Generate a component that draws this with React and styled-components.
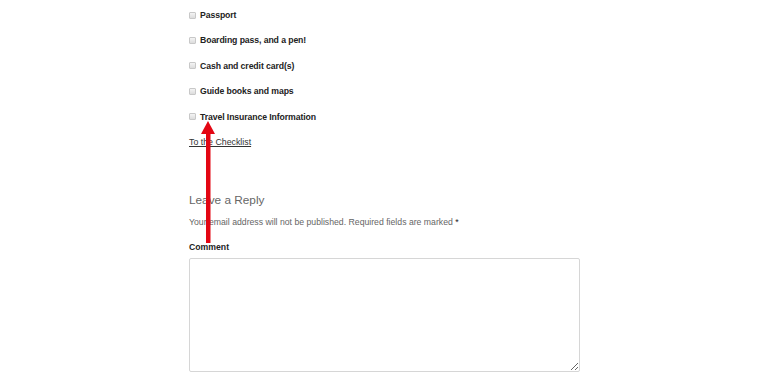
import React from 'react'
import styled, { createGlobalStyle } from 'styled-components'

const GlobalStyle = createGlobalStyle`
  html, body {
    margin: 0;
    padding: 0;
    background: #fff;
  }
  body {
    font-family: "Liberation Sans", Arial, sans-serif;
    color: #222;
  }
`

const Page = styled.div`
  position: relative;
  width: 768px;
  height: 381px;
  overflow: hidden;
  background: #fff;
`

const Content = styled.div`
  width: 391px;
  margin-left: 189px;
  padding-top: 9px;
`

const Checklist = styled.ul`
  list-style: none;
  margin: 0;
  padding: 0;
  display: flex;
  flex-direction: column;
  gap: 13.4px;
`

const Item = styled.li`
  display: flex;
  align-items: center;
  gap: 4px;
  height: 12px;
`

const Box = styled.span`
  width: 5px;
  height: 5px;
  border: 1px solid #c8c8c8;
  background: linear-gradient(#f4f4f4, #dcdcdc);
  border-radius: 1px;
`

const ItemLabel = styled.span`
  font-size: 8.7px;
  font-weight: 700;
  color: #222;
  letter-spacing: -0.1px;
`

const BackLink = styled.a`
  display: inline-block;
  margin-top: 14px;
  font-size: 8.8px;
  color: #333;
  text-decoration: underline;
  text-underline-offset: 1px;
`

const Reply = styled.section`
  margin-top: 44px;
`

const ReplyTitle = styled.h3`
  margin: 0;
  font-size: 11.8px;
  font-weight: 300;
  color: #666;
`

const Notes = styled.p`
  margin: 10px 0 0;
  font-size: 8.7px;
  color: #666;
`

const Required = styled.span`
  color: #222;
`

const FieldLabel = styled.label`
  display: block;
  margin-top: 15px;
  font-size: 8.7px;
  font-weight: 700;
  color: #222;
`

const Comment = styled.textarea`
  display: block;
  box-sizing: border-box;
  width: 391px;
  height: 114px;
  margin-top: 6px;
  border: 1px solid #d6d6d6;
  border-radius: 2px;
  background: #fff;
  resize: vertical;
  font-family: inherit;
`

const Arrow = styled.svg`
  position: absolute;
  left: 200px;
  top: 120px;
`

const items = [
  'Passport',
  'Boarding pass, and a pen!',
  'Cash and credit card(s)',
  'Guide books and maps',
  'Travel Insurance Information',
]

export default function App() {
  return (
    <Page>
      <GlobalStyle />
      <Content>
        <Checklist>
          {items.map((t) => (
            <Item key={t}>
              <Box />
              <ItemLabel>{t}</ItemLabel>
            </Item>
          ))}
        </Checklist>
        <BackLink href="#">To the Checklist</BackLink>
        <Reply>
          <ReplyTitle>Leave a Reply</ReplyTitle>
          <Notes>
            Your email address will not be published. Required fields are marked <Required>*</Required>
          </Notes>
          <FieldLabel htmlFor="comment">Comment</FieldLabel>
          <Comment id="comment" />
        </Reply>
      </Content>
      <Arrow width="16" height="125" viewBox="0 0 16 125">
        <polygon points="8,1 15,14 1,14" fill="#e30613" />
        <rect x="6" y="13" width="4.5" height="110" fill="#e30613" />
      </Arrow>
    </Page>
  )
}
